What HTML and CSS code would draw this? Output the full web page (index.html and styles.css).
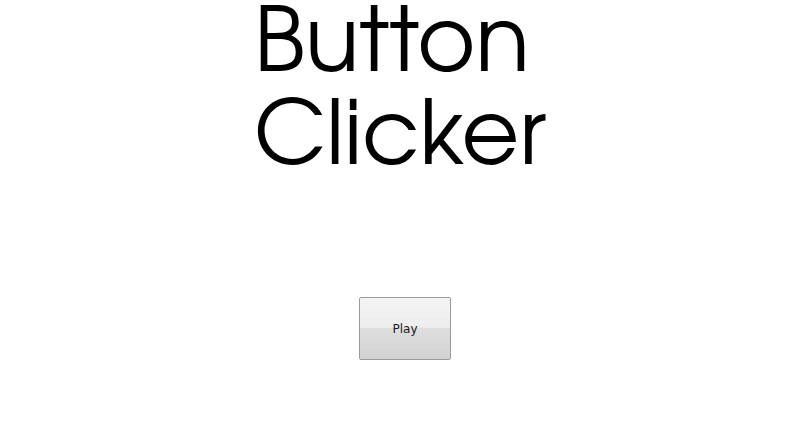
FILE: index.html
```html
<!DOCTYPE html>
<html lang="en">
<head>
<meta charset="utf-8">
<title>Button Clicker</title>
<link rel="stylesheet" href="styles.css">
</head>
<body>
<main class="screen">
  <h1 class="title">Button<br>Clicker</h1>
  <button class="play-btn" type="button">Play</button>
</main>
</body>
</html>
```
FILE: styles.css
```css
html, body {
  margin: 0;
  padding: 0;
  background: #ffffff;
}

.screen {
  width: 794px;
  height: 445px;
  display: flex;
  flex-direction: column;
  align-items: center;
}

.title {
  margin: 0;
  padding: 0 0 0 14px;
  width: 300px;
  font-family: "Century Gothic", "URW Gothic", "TeX Gyre Adventor", Lato, sans-serif;
  font-weight: 400;
  font-size: 89px;
  line-height: 93px;
  color: #000;
  text-align: left;
}

.play-btn {
  margin-top: 111px;
  margin-left: 16px;
  width: 92px;
  height: 63px;
  border: 1px solid #9a9a9a;
  border-radius: 2px;
  background: linear-gradient(to bottom, #f4f4f4 0%, #ededed 48%, #dedede 50%, #d2d2d2 100%);
  font-family: Tahoma, "DejaVu Sans", sans-serif;
  font-size: 12px;
  color: #1a1a1a;
  padding: 0;
}
```
